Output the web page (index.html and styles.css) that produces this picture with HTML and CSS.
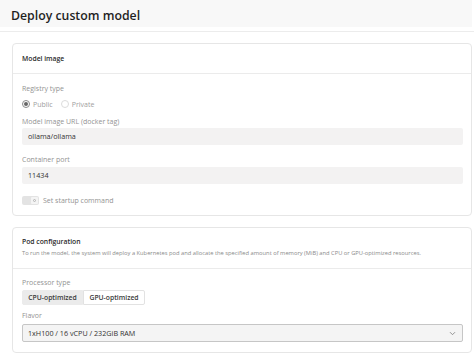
FILE: index.html
```html
<!DOCTYPE html>
<html>
<head>
<meta charset="utf-8">
<link rel="stylesheet" href="styles.css">
</head>
<body>
<div class="top">
  <div class="header"><h1 class="title">Deploy custom model</h1></div>
</div>
<main class="main">
  <section class="card card-image">
    <div class="card-head"><h2 class="card-title">Model image</h2></div>
    <div class="card-body">
      <div class="label">Registry type</div>
      <div class="radios">
        <span class="radio on"></span><span class="radio-text">Public</span>
        <span class="radio"></span><span class="radio-text">Private</span>
      </div>
      <div class="label l-url">Model image URL (docker tag)</div>
      <div class="input">ollama/ollama</div>
      <div class="label l-port">Container port</div>
      <div class="input i-port">11434</div>
      <div class="toggle-row">
        <span class="toggle"><span class="knob"><span class="knob-dot"></span></span></span>
        <span class="toggle-text">Set startup command</span>
      </div>
    </div>
  </section>
  <section class="card card-pod">
    <div class="card-head pod-head">
      <h2 class="card-title">Pod configuration</h2>
      <p class="desc">To run the model, the system will deploy a Kubernetes pod and allocate the specified amount of memory (MiB) and CPU or GPU-optimized resources.</p>
    </div>
    <div class="card-body pod-body">
      <div class="label">Processor type</div>
      <div class="seg">
        <span class="seg-btn active">CPU-optimized</span>
        <span class="seg-btn">GPU-optimized</span>
      </div>
      <div class="label l-flavor">Flavor</div>
      <div class="select">
        <span>1xH100 / 16 vCPU / 232GiB RAM</span>
        <svg class="chev" width="7" height="5" viewBox="0 0 7 5"><path d="M1 1.2 L3.5 3.7 L6 1.2" fill="none" stroke="#888" stroke-width="0.9"/></svg>
      </div>
    </div>
  </section>
</main>
</body>
</html>
```
FILE: styles.css
```css
* { box-sizing: border-box; }
html, body { margin: 0; padding: 0; background: #fff; }
body {
  font-family: "Open Sans", "Noto Sans", sans-serif;
  color: #333;
  width: 474px;
  overflow: hidden;
}
.top {
  height: 32px;
  border-bottom: 1px solid #ececec;
  padding-right: 2px;
}
.header {
  height: 27px;
  background: #f8f8f8;
  padding: 4px 0 0 11px;
}
.title {
  margin: 0;
  font-size: 12.3px;
  line-height: 23px;
  font-weight: 600;
  color: #1f1f1f;
}
.main {
  padding: 11px 2px 0 12px;
}
.card {
  border: 1px solid #e6e6e6;
  border-radius: 4px;
  background: #fff;
}
.card-pod { margin-top: 11px; }
.card-head {
  height: 30px;
  border-bottom: 1px solid #ebebeb;
  padding: 10px 9px 0;
}
.card-title {
  margin: 0;
  font-size: 6.8px;
  line-height: 10px;
  font-weight: 600;
  color: #2b2b2b;
}
.card-body {
  padding: 10px 8px 10px 9px;
}
.label {
  font-size: 7px;
  line-height: 10px;
  color: #939393;
}
.radios {
  display: flex;
  align-items: center;
  height: 10px;
  margin-top: 5px;
}
.radio {
  width: 8px;
  height: 8px;
  border-radius: 50%;
  border: 1px solid #dcdcdc;
  display: inline-flex;
  align-items: center;
  justify-content: center;
}
.radio.on { border-color: #8a8a8a; }
.radio.on::after {
  content: "";
  width: 4px;
  height: 4px;
  border-radius: 50%;
  background: #666;
}
.radio-text {
  font-size: 7px;
  color: #a0a0a0;
  margin: 0 8px 0 3px;
}
.l-url { margin-top: 8px; }
.input {
  margin-top: 1px;
  height: 17px;
  background: #f3f2f2;
  border-radius: 2px;
  padding-left: 6px;
  font-size: 7.2px;
  line-height: 17px;
  color: #333;
}
.l-port { margin-top: 10px; }
.i-port { margin-top: 2px; }
.toggle-row {
  display: flex;
  align-items: center;
  margin-top: 12px;
  height: 9px;
}
.toggle {
  width: 17px;
  height: 9px;
  border-radius: 2px;
  background: #e3e3e3;
  display: flex;
  justify-content: flex-end;
  padding: 1px;
}
.knob {
  width: 7px;
  height: 7px;
  background: #f4f4f4;
  border-radius: 1px;
  display: flex;
  align-items: center;
  justify-content: center;
}
.knob-dot {
  width: 3px;
  height: 3px;
  border-radius: 50%;
  border: 1px solid #b5b5b5;
}
.toggle-text {
  font-size: 7px;
  color: #939393;
  margin-left: 4px;
}
.pod-head {
  height: 41px;
  padding-top: 9px;
}
.desc {
  margin: 2px 0 0;
  font-size: 5.75px;
  line-height: 8px;
  color: #8a8a8a;
  white-space: nowrap;
}
.pod-body { padding-top: 9px; }
.seg {
  display: flex;
  margin-top: 2px;
  height: 15px;
}
.seg-btn {
  width: 62px;
  height: 15px;
  font-size: 6.8px;
  font-weight: 600;
  line-height: 13px;
  text-align: center;
  color: #3a3a3a;
  border: 1px solid #e2e2e2;
  background: #fff;
}
.seg-btn.active {
  width: 61px;
  background: #ebebeb;
  border-color: #ebebeb;
  border-radius: 2px 0 0 2px;
}
.seg-btn:last-child { border-radius: 0 2px 2px 0; }
.l-flavor { margin-top: 6px; }
.select {
  margin-top: 3px;
  height: 18px;
  border: 1px solid #c6c6c6;
  border-radius: 2px;
  background: #f4f4f4;
  display: flex;
  align-items: center;
  justify-content: space-between;
  padding: 0 6px 0 5px;
  font-size: 7.2px;
  color: #333;
}
.chev { display: block; }
```
